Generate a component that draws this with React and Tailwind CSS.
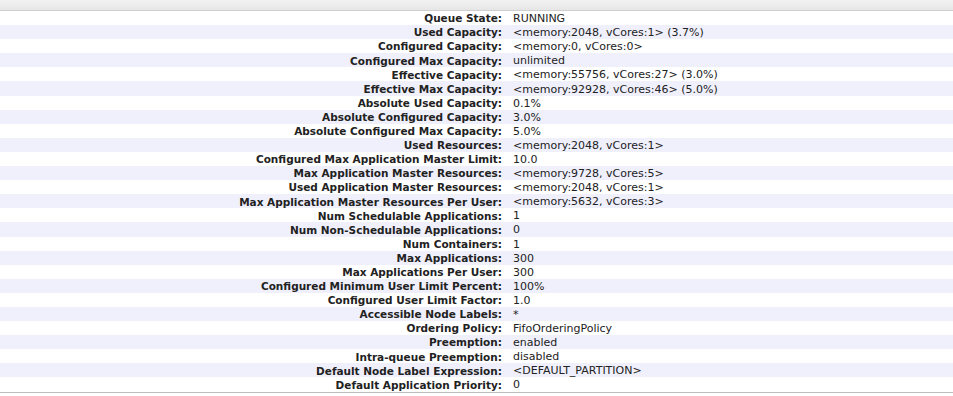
const rows = [
  ["Queue State:", "RUNNING"],
  ["Used Capacity:", "<memory:2048, vCores:1> (3.7%)"],
  ["Configured Capacity:", "<memory:0, vCores:0>"],
  ["Configured Max Capacity:", "unlimited"],
  ["Effective Capacity:", "<memory:55756, vCores:27> (3.0%)"],
  ["Effective Max Capacity:", "<memory:92928, vCores:46> (5.0%)"],
  ["Absolute Used Capacity:", "0.1%"],
  ["Absolute Configured Capacity:", "3.0%"],
  ["Absolute Configured Max Capacity:", "5.0%"],
  ["Used Resources:", "<memory:2048, vCores:1>"],
  ["Configured Max Application Master Limit:", "10.0"],
  ["Max Application Master Resources:", "<memory:9728, vCores:5>"],
  ["Used Application Master Resources:", "<memory:2048, vCores:1>"],
  ["Max Application Master Resources Per User:", "<memory:5632, vCores:3>"],
  ["Num Schedulable Applications:", "1"],
  ["Num Non-Schedulable Applications:", "0"],
  ["Num Containers:", "1"],
  ["Max Applications:", "300"],
  ["Max Applications Per User:", "300"],
  ["Configured Minimum User Limit Percent:", "100%"],
  ["Configured User Limit Factor:", "1.0"],
  ["Accessible Node Labels:", "*"],
  ["Ordering Policy:", "FifoOrderingPolicy"],
  ["Preemption:", "enabled"],
  ["Intra-queue Preemption:", "disabled"],
  ["Default Node Label Expression:", "<DEFAULT_PARTITION>"],
  ["Default Application Priority:", "0"],
];

export default function App() {
  return (
    <div className="w-[953px] h-[396px] bg-white overflow-hidden" style={{ fontFamily: '"DejaVu Sans", Verdana, sans-serif' }}>
      <div className="h-[11px] bg-gradient-to-b from-[#f2f2f2] to-[#e6e6e6] border-b border-[#cfcfcf]" />
      <div className="border-b border-[#bdbdbd]">
        {rows.map(([label, value], i) => (
          <div
            key={label}
            className={`flex h-[14.1px] items-center pt-px leading-none text-[#222] ${i % 2 ? "bg-[#f0f0fc]" : "bg-white"}`}
          >
            <div className="w-[502px] shrink-0 text-right text-[10.5px] font-bold">{label}</div>
            <div className="pl-[11px] text-[11px]">{value}</div>
          </div>
        ))}
      </div>
    </div>
  );
}
